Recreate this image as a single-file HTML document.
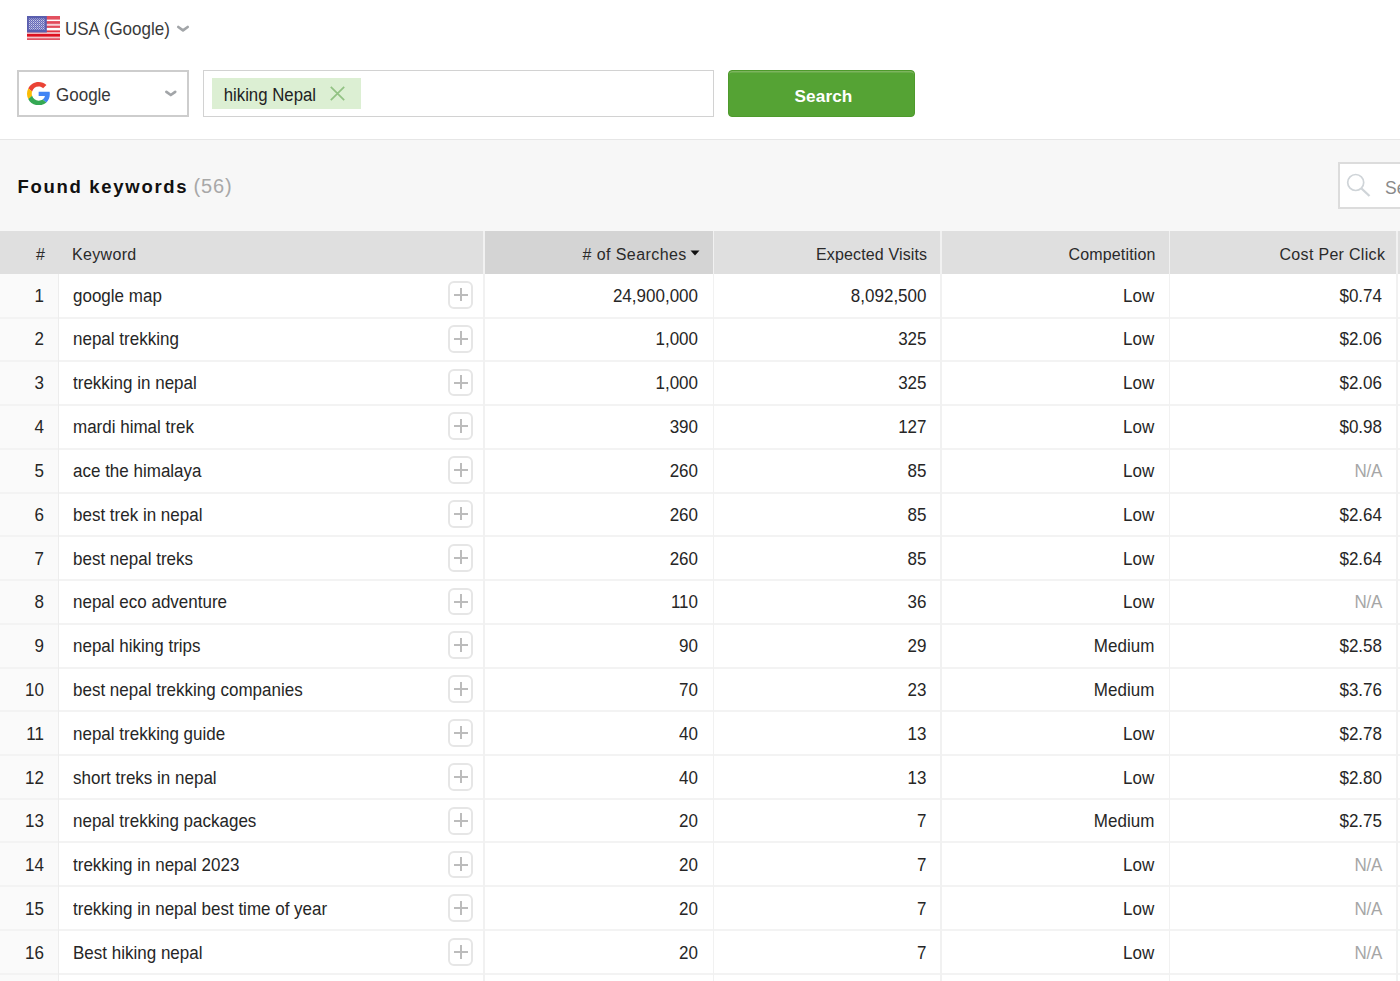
<!DOCTYPE html>
<html><head><meta charset="utf-8">
<style>
*{box-sizing:border-box;margin:0;padding:0}
html,body{width:1400px;height:981px;overflow:hidden;background:#fff}
body{position:relative;font-family:"Liberation Sans",sans-serif;color:#222}
.abs{position:absolute}
#usa{position:absolute;left:65px;top:19.3px;font-size:17px;line-height:20px;color:#3a3a3a;white-space:nowrap;transform:scaleY(1.075);transform-origin:0 3.7px}
#gsel{position:absolute;left:16.5px;top:70px;width:172px;height:46.5px;border:2.3px solid #cdcdcd;background:#fff}
#gtxt{position:absolute;left:56px;top:84.7px;font-size:17px;line-height:20px;color:#383838;transform:scaleY(1.1);transform-origin:0 3.7px}
#kwbox{position:absolute;left:203px;top:70px;width:511px;height:47px;border:1.3px solid #d2d2d2;background:#fff}
#tag{position:absolute;left:212px;top:78px;width:148.5px;height:31px;background:#dcefd3}
#tagtxt{position:absolute;left:223.7px;top:84.6px;font-size:16.8px;line-height:20px;color:#222;white-space:nowrap;transform:scaleY(1.085);transform-origin:0 3.8px}
#btn{position:absolute;left:728.2px;top:70.2px;width:186.5px;height:46.5px;background:#55a334;border-radius:4px;border:1px solid #4e9a2c;box-shadow:inset 0 1.6px 0 #7db45e}
#btntxt{position:absolute;left:730.5px;top:86px;width:186px;text-align:center;font-size:17.2px;font-weight:bold;line-height:20px;color:#fff;letter-spacing:0.1px}
#hline{position:absolute;left:0;top:138.6px;width:1400px;height:1.3px;background:#e6e6e6}
#panel{position:absolute;left:0;top:140px;width:1400px;height:91px;background:#f7f7f7}
#found{position:absolute;left:17.5px;top:176px;font-size:18.5px;font-weight:bold;line-height:22px;color:#111;letter-spacing:1.7px;white-space:nowrap}
#cnt{position:absolute;left:193.5px;top:175px;font-size:20px;line-height:22px;color:#a8a8a8;letter-spacing:0.9px;white-space:nowrap}
#sbox{position:absolute;left:1338px;top:162px;width:80px;height:47px;border:2.3px solid #dcdcdc;background:#fff}
#stxt{position:absolute;left:1385px;top:177.5px;font-size:17.5px;line-height:20px;color:#8a8a8a;white-space:nowrap}
#thead{position:absolute;left:0;top:231px;width:1400px;height:43px;background:#dfdfdf}
.th{position:absolute;top:1px;height:43px;line-height:46px;font-size:16px;color:#2a2a2a;white-space:nowrap}
.sep{position:absolute;width:1.3px;background:#f1f1f1}
#body{position:absolute;left:0;top:274px;width:1400px;height:707px;background:#fff}
#numcol{position:absolute;left:0;top:274px;width:58px;height:707px;background:#fafafa}
.row{position:absolute;left:0;width:1400px;height:43.75px}
.rl{position:absolute;left:0;width:1400px;height:2px;background:#f3f3f3}
.c{position:absolute;top:0.7px;height:43.75px;line-height:44px;font-size:17px;color:#262626;white-space:nowrap;transform:scaleY(1.075);transform-origin:0 21.8px}
.num{left:0;width:44px;text-align:right}
.kw{left:73px}
.s{left:484px;width:214px;text-align:right}
.v{left:714px;width:212.5px;text-align:right}
.cp{left:941px;width:213.3px;text-align:right}
.cpc{left:1170px;width:212px;text-align:right}
.na{color:#a6a6a6;letter-spacing:-0.3px;padding-right:0px}
.plus{position:absolute;left:448.3px;top:7px;width:25.2px;height:27.8px;border:2px solid #e6e6e6;border-radius:6px;background:#fff}
.plus::before{content:"";position:absolute;left:3.5px;top:11px;width:14.2px;height:2px;background:#bcbcbc}
.plus::after{content:"";position:absolute;left:9.6px;top:4.6px;width:2px;height:13.8px;background:#bcbcbc}
</style></head><body>
<svg class="abs" style="left:27px;top:16px" width="33" height="24" viewBox="0 0 33 24">
<defs><pattern id="stars" x="0" y="0" width="2" height="2" patternUnits="userSpaceOnUse"><rect width="2" height="2" fill="#6669b6"/><rect x="0" y="0" width="1" height="1" fill="#c8cae8"/><rect x="1" y="1" width="1" height="1" fill="#9a9cd4"/></pattern></defs>
<rect x="0" y="0" width="33" height="24" fill="#fff"/>
<rect x="0" y="0" width="33" height="3.6" fill="#e3505f"/>
<rect x="0" y="5.1" width="33" height="2.8" fill="#e24a5a"/>
<rect x="0" y="7.9" width="33" height="1.8" fill="#f6d0d5"/>
<rect x="0" y="9.7" width="33" height="2.2" fill="#e24d5c"/>
<rect x="0" y="14.4" width="33" height="2.1" fill="#e23545"/>
<rect x="0" y="16.5" width="33" height="1.4" fill="#f2c0c5"/>
<rect x="0" y="17.9" width="33" height="2.9" fill="#dd1020"/>
<rect x="0" y="20.8" width="33" height="1.4" fill="#f3c3c8"/>
<rect x="0" y="22.2" width="33" height="1.8" fill="#e25262"/>
<rect x="0" y="0" width="19.8" height="16.5" fill="#5a5eae"/>
<rect x="1.8" y="2.5" width="16" height="11.5" fill="url(#stars)"/>
</svg>
<div id="usa">USA (Google)</div>
<svg class="abs" style="left:176px;top:24px" width="14" height="9" viewBox="0 0 14 9"><path d="M2.3 3 L7 6.3 L11.7 3" fill="none" stroke="#a2a5a8" stroke-width="2.7" stroke-linecap="round" stroke-linejoin="round"/></svg>
<div id="gsel"></div>
<svg class="abs" style="left:26.8px;top:81.7px" width="23.3" height="23.3" viewBox="0 0 48 48">
<path fill="#EA4335" d="M24 9.5c3.54 0 6.71 1.22 9.21 3.6l6.85-6.85C35.9 2.38 30.47 0 24 0 14.62 0 6.51 5.38 2.56 13.22l7.98 6.19C12.43 13.72 17.74 9.5 24 9.5z"/>
<path fill="#4285F4" d="M46.98 24.55c0-1.57-.15-3.09-.38-4.55H24v9.02h12.94c-.58 2.96-2.26 5.48-4.78 7.18l7.73 6c4.51-4.18 7.09-10.36 7.09-17.65z"/>
<path fill="#FBBC05" d="M10.53 28.59c-.48-1.45-.76-2.99-.76-4.59s.27-3.14.76-4.59l-7.98-6.19C.92 16.46 0 20.12 0 24c0 3.88.92 7.54 2.56 10.78l7.97-6.19z"/>
<path fill="#34A853" d="M24 48c6.48 0 11.93-2.13 15.89-5.81l-7.73-6c-2.15 1.45-4.92 2.3-8.16 2.3-6.26 0-11.57-4.22-13.47-9.91l-7.98 6.19C6.51 42.62 14.62 48 24 48z"/>
</svg>
<div id="gtxt">Google</div>
<svg class="abs" style="left:164.2px;top:89px" width="14" height="9" viewBox="0 0 14 9"><path d="M2.4 2.9 L6.8 6 L11.2 2.9" fill="none" stroke="#a2a5a8" stroke-width="2.7" stroke-linecap="round" stroke-linejoin="round"/></svg>
<div id="kwbox"></div>
<div id="tag"></div>
<div id="tagtxt">hiking Nepal</div>
<svg class="abs" style="left:329px;top:85px" width="17" height="17" viewBox="0 0 17 17"><path d="M1.8 1.8 L15.2 15.2 M15.2 1.8 L1.8 15.2" fill="none" stroke="#92c283" stroke-width="1.7"/></svg>
<div id="btn"></div>
<div id="btntxt">Search</div>
<div id="hline"></div>
<div id="panel"></div>
<div id="found">Found keywords</div>
<div id="cnt">(56)</div>
<div id="sbox"></div>
<svg class="abs" style="left:1345px;top:172px" width="28" height="28" viewBox="0 0 28 28"><circle cx="10.7" cy="10.5" r="8" fill="none" stroke="#cfd4d8" stroke-width="1.7"/><path d="M16.5 16.5 L24.5 24" stroke="#cfd4d8" stroke-width="2.3" fill="none"/></svg>
<div id="stxt">Se</div>
<div id="thead">
<div class="abs" style="left:484px;top:0;width:229px;height:43px;background:#d4d4d4"></div>
<div class="th" style="left:36px">#</div>
<div class="th" style="left:72px;letter-spacing:0.33px">Keyword</div>
<div class="th" style="left:582.5px;letter-spacing:0.42px"># of Searches</div>
<svg class="abs" style="left:690px;top:19px" width="10" height="7" viewBox="0 0 10 7"><path d="M0.5 0.5 L9.5 0.5 L5 5.5 Z" fill="#111"/></svg>
<div class="th" style="left:816px;letter-spacing:0.14px">Expected Visits</div>
<div class="th" style="left:1068.5px;letter-spacing:0.15px">Competition</div>
<div class="th" style="left:1279.5px;letter-spacing:0.31px">Cost Per Click</div>
</div>
<div id="body"></div>
<div id="numcol"></div>
<div class="row" style="top:274.00px">
<div class="c num">1</div><div class="c kw">google map</div><div class="plus"></div><div class="c s">24,900,000</div><div class="c v">8,092,500</div><div class="c cp">Low</div><div class="c cpc">$0.74</div>
</div>
<div class="row" style="top:317.81px">
<div class="c num">2</div><div class="c kw">nepal trekking</div><div class="plus"></div><div class="c s">1,000</div><div class="c v">325</div><div class="c cp">Low</div><div class="c cpc">$2.06</div>
</div>
<div class="row" style="top:361.62px">
<div class="c num">3</div><div class="c kw">trekking in nepal</div><div class="plus"></div><div class="c s">1,000</div><div class="c v">325</div><div class="c cp">Low</div><div class="c cpc">$2.06</div>
</div>
<div class="row" style="top:405.43px">
<div class="c num">4</div><div class="c kw">mardi himal trek</div><div class="plus"></div><div class="c s">390</div><div class="c v">127</div><div class="c cp">Low</div><div class="c cpc">$0.98</div>
</div>
<div class="row" style="top:449.24px">
<div class="c num">5</div><div class="c kw">ace the himalaya</div><div class="plus"></div><div class="c s">260</div><div class="c v">85</div><div class="c cp">Low</div><div class="c cpc na">N/A</div>
</div>
<div class="row" style="top:493.05px">
<div class="c num">6</div><div class="c kw">best trek in nepal</div><div class="plus"></div><div class="c s">260</div><div class="c v">85</div><div class="c cp">Low</div><div class="c cpc">$2.64</div>
</div>
<div class="row" style="top:536.86px">
<div class="c num">7</div><div class="c kw">best nepal treks</div><div class="plus"></div><div class="c s">260</div><div class="c v">85</div><div class="c cp">Low</div><div class="c cpc">$2.64</div>
</div>
<div class="row" style="top:580.67px">
<div class="c num">8</div><div class="c kw">nepal eco adventure</div><div class="plus"></div><div class="c s">110</div><div class="c v">36</div><div class="c cp">Low</div><div class="c cpc na">N/A</div>
</div>
<div class="row" style="top:624.48px">
<div class="c num">9</div><div class="c kw">nepal hiking trips</div><div class="plus"></div><div class="c s">90</div><div class="c v">29</div><div class="c cp">Medium</div><div class="c cpc">$2.58</div>
</div>
<div class="row" style="top:668.29px">
<div class="c num">10</div><div class="c kw">best nepal trekking companies</div><div class="plus"></div><div class="c s">70</div><div class="c v">23</div><div class="c cp">Medium</div><div class="c cpc">$3.76</div>
</div>
<div class="row" style="top:712.10px">
<div class="c num">11</div><div class="c kw">nepal trekking guide</div><div class="plus"></div><div class="c s">40</div><div class="c v">13</div><div class="c cp">Low</div><div class="c cpc">$2.78</div>
</div>
<div class="row" style="top:755.91px">
<div class="c num">12</div><div class="c kw">short treks in nepal</div><div class="plus"></div><div class="c s">40</div><div class="c v">13</div><div class="c cp">Low</div><div class="c cpc">$2.80</div>
</div>
<div class="row" style="top:799.72px">
<div class="c num">13</div><div class="c kw">nepal trekking packages</div><div class="plus"></div><div class="c s">20</div><div class="c v">7</div><div class="c cp">Medium</div><div class="c cpc">$2.75</div>
</div>
<div class="row" style="top:843.53px">
<div class="c num">14</div><div class="c kw">trekking in nepal 2023</div><div class="plus"></div><div class="c s">20</div><div class="c v">7</div><div class="c cp">Low</div><div class="c cpc na">N/A</div>
</div>
<div class="row" style="top:887.34px">
<div class="c num">15</div><div class="c kw">trekking in nepal best time of year</div><div class="plus"></div><div class="c s">20</div><div class="c v">7</div><div class="c cp">Low</div><div class="c cpc na">N/A</div>
</div>
<div class="row" style="top:931.15px">
<div class="c num">16</div><div class="c kw">Best hiking nepal</div><div class="plus"></div><div class="c s">20</div><div class="c v">7</div><div class="c cp">Low</div><div class="c cpc na">N/A</div>
</div><div class="rl" style="top:317px"></div>
<div class="rl" style="top:360px"></div>
<div class="rl" style="top:404px"></div>
<div class="rl" style="top:448px"></div>
<div class="rl" style="top:492px"></div>
<div class="rl" style="top:535px"></div>
<div class="rl" style="top:579px"></div>
<div class="rl" style="top:623px"></div>
<div class="rl" style="top:667px"></div>
<div class="rl" style="top:710px"></div>
<div class="rl" style="top:754px"></div>
<div class="rl" style="top:798px"></div>
<div class="rl" style="top:841px"></div>
<div class="rl" style="top:885px"></div>
<div class="rl" style="top:929px"></div>
<div class="rl" style="top:973px"></div>
<div class="sep" style="left:57.6px;top:274px;height:707px;background:#ededed"></div>
<div class="sep" style="left:483.3px;top:231px;height:750px"></div>
<div class="sep" style="left:712.7px;top:231px;height:750px"></div>
<div class="sep" style="left:940px;top:231px;height:750px;width:1.8px"></div>
<div class="sep" style="left:1169px;top:231px;height:750px"></div>
<div class="sep" style="left:1396.3px;top:231px;height:750px"></div>
</body></html>
